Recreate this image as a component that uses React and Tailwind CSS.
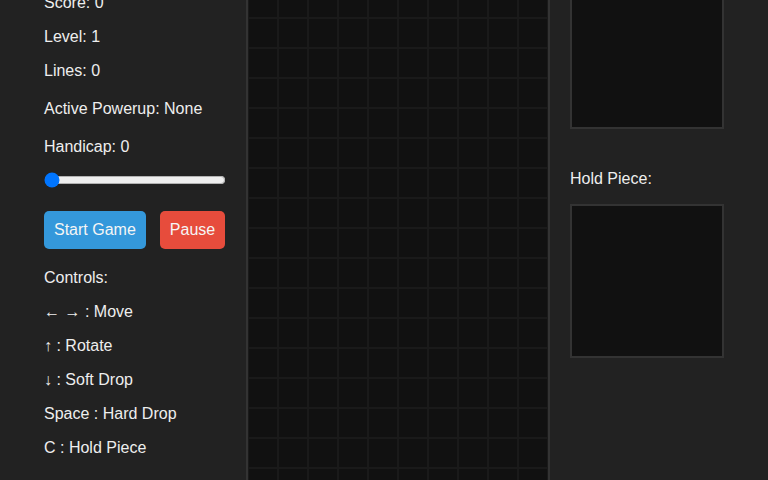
import React, { useState } from 'react';

const COLS = 10;
const ROWS = 20;

const controls = [
  { keys: '← →', action: 'Move' },
  { keys: '↑', action: 'Rotate' },
  { keys: '↓', action: 'Soft Drop' },
  { keys: 'Space', action: 'Hard Drop' },
  { keys: 'C', action: 'Hold Piece' },
];

const PreviewBox = () => (
  <div className="w-[154px] h-[154px] border-2 border-[#333] bg-[#111]" />
);

const App = () => {
  const [handicap, setHandicap] = useState(0);
  const cells = Array.from({ length: COLS * ROWS });

  return (
    <div className="h-screen overflow-hidden bg-[#222] text-[#eee] font-['Liberation_Sans',Arial,sans-serif] text-base flex items-center justify-center">
      <div className="flex mt-9 h-[604px]">
        {/* Left: stats + controls */}
        <div className="w-[222px] px-5 pt-[38px] flex flex-col items-start">
          <p className="leading-[18px]">Score: 0</p>
          <p className="leading-[18px] mt-4">Level: 1</p>
          <p className="leading-[18px] mt-4">Lines: 0</p>
          <p className="leading-[18px] mt-5">Active Powerup: None</p>
          <p className="leading-[18px] mt-5">Handicap: {handicap}</p>
          <input
            type="range"
            min="0"
            max="10"
            value={handicap}
            onChange={(e) => setHandicap(Number(e.target.value))}
            className="block w-full h-4 mt-4"
          />
          <div className="flex gap-[14px] mt-[23px]">
            <button className="px-[10px] py-[10px] leading-[18px] rounded-[5px] bg-[#3498db] text-[#f5f5f5]">
              Start Game
            </button>
            <button className="px-[10px] py-[10px] leading-[18px] rounded-[5px] bg-[#e74c3c] text-[#f5f5f5]">
              Pause
            </button>
          </div>
          <p className="leading-[18px] mt-5">Controls:</p>
          {controls.map((c) => (
            <p key={c.action} className="leading-[18px] mt-4">
              {c.keys} : {c.action}
            </p>
          ))}
        </div>

        {/* Board */}
        <div className="border-2 border-[#333] bg-[#111] w-[304px] h-[604px]">
          <div className="grid grid-cols-10 w-[300px]">
            {cells.map((_, i) => (
              <div key={i} className="h-[30px] border border-[#1a1a1a]" />
            ))}
          </div>
        </div>

        {/* Right: next / hold */}
        <div className="w-[194px] px-5 flex flex-col">
          <p className="leading-[18px]">Next Piece:</p>
          <div className="mt-px">
            <PreviewBox />
          </div>
          <p className="leading-[18px] mt-[41px]">Hold Piece:</p>
          <div className="mt-4">
            <PreviewBox />
          </div>
        </div>
      </div>
    </div>
  );
};

export default App;
